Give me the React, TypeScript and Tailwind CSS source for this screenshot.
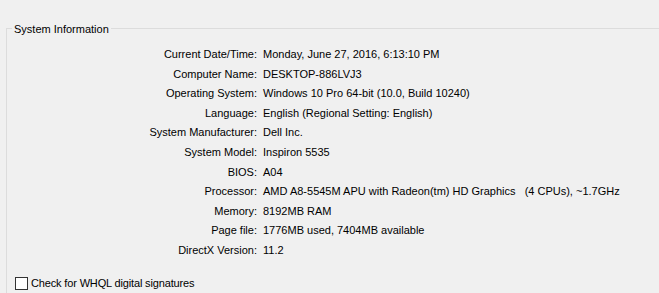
import React from "react";

const rows: [string, string][] = [
  ["Current Date/Time:", "Monday, June 27, 2016, 6:13:10 PM"],
  ["Computer Name:", "DESKTOP-886LVJ3"],
  ["Operating System:", "Windows 10 Pro 64-bit (10.0, Build 10240)"],
  ["Language:", "English (Regional Setting: English)"],
  ["System Manufacturer:", "Dell Inc."],
  ["System Model:", "Inspiron 5535"],
  ["BIOS:", "A04"],
  ["Processor:", "AMD A8-5545M APU with Radeon(tm) HD Graphics   (4 CPUs), ~1.7GHz"],
  ["Memory:", "8192MB RAM"],
  ["Page file:", "1776MB used, 7404MB available"],
  ["DirectX Version:", "11.2"],
];

export default function App() {
  return (
    <div
      className="w-[659px] h-[293px] bg-[#f0f0f0] overflow-hidden text-[11px] text-black"
      style={{ fontFamily: '"Liberation Sans", Arial, sans-serif' }}
    >
      <div className="pt-[28px] pl-[6px]">
        <div className="relative border-l border-t border-[#dcdcdc] h-[280px]">
          <div className="absolute left-[5px] top-[-7px] px-[2px] bg-[#f0f0f0] leading-[15px]">
            System Information
          </div>
          <div className="grid grid-cols-[250px_1fr] gap-x-[6px] pt-[16px] auto-rows-[19.6px]">
            {rows.map(([k, v]) => (
              <React.Fragment key={k}>
                <div className="text-right leading-[19.6px] whitespace-nowrap">{k}</div>
                <div className="leading-[19.6px] whitespace-pre">{v}</div>
              </React.Fragment>
            ))}
          </div>
          <div className="flex items-center gap-[3px] mt-[16px] ml-[8px]">
            <div className="w-[13px] h-[13px] border border-[#333333] bg-white" />
            <span className="leading-[13px] tracking-[-0.15px]">Check for WHQL digital signatures</span>
          </div>
        </div>
      </div>
    </div>
  );
}
